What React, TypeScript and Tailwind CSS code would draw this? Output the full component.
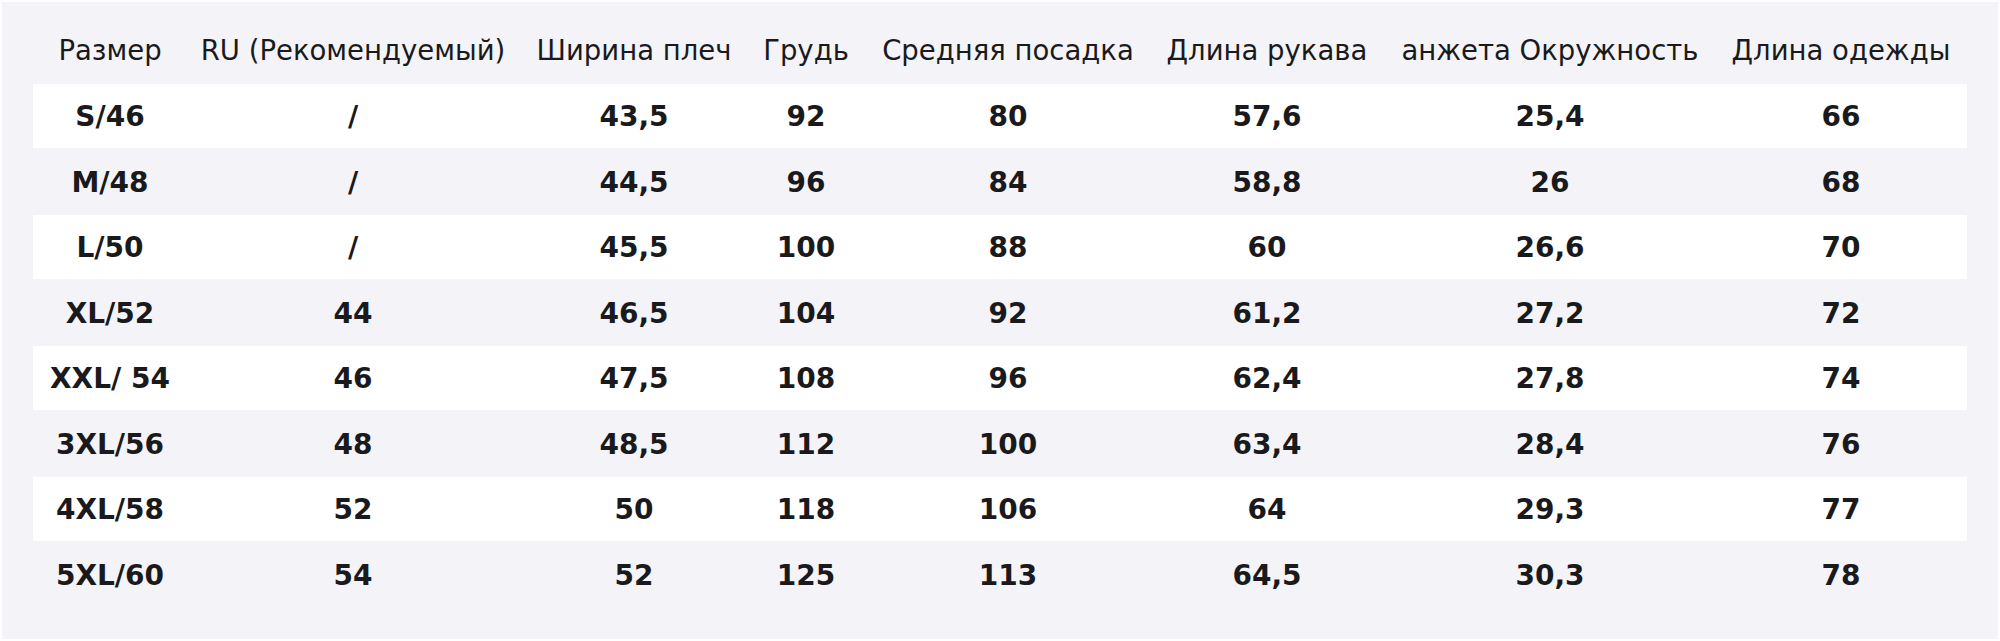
import React from 'react';

// Size chart columns (header labels as shown on the product page)
const columns = [
  'Размер',
  'RU (Рекомендуемый)',
  'Ширина плеч',
  'Грудь',
  'Средняя посадка',
  'Длина рукава',
  'анжета Окружность',
  'Длина одежды',
];

const rows: string[][] = [
  ['S/46', '/', '43,5', '92', '80', '57,6', '25,4', '66'],
  ['M/48', '/', '44,5', '96', '84', '58,8', '26', '68'],
  ['L/50', '/', '45,5', '100', '88', '60', '26,6', '70'],
  ['XL/52', '44', '46,5', '104', '92', '61,2', '27,2', '72'],
  ['XXL/ 54', '46', '47,5', '108', '96', '62,4', '27,8', '74'],
  ['3XL/56', '48', '48,5', '112', '100', '63,4', '28,4', '76'],
  ['4XL/58', '52', '50', '118', '106', '64', '29,3', '77'],
  ['5XL/60', '54', '52', '125', '113', '64,5', '30,3', '78'],
];

const gridCols = 'grid grid-cols-[154px_332px_230px_114px_290px_228px_338px_244px]';

export default function App() {
  return (
    <div className="w-[2000px] h-[641px] bg-white p-[2px] font-['DejaVu_Sans',sans-serif] text-[#1a1a1d]">
      <div className="h-[637px] bg-[#f4f4f8] px-[31px] pt-[15px] pb-[30px]">
        {/* Header */}
        <div className={`${gridCols} h-[67px] items-center text-[27.5px]`}>
          {columns.map(label => (
            <div key={label} className="text-center whitespace-nowrap">
              {label}
            </div>
          ))}
        </div>

        {/* Body rows, white / grey striping */}
        {rows.map((row, i) => (
          <div
            key={row[0]}
            className={`${gridCols} items-center pt-[2px] text-[28px] font-bold ${
              i % 2 === 0 ? 'h-[64px] bg-white' : 'h-[67px]'
            }`}
          >
            {row.map((cell, j) => (
              <div key={j} className="text-center whitespace-nowrap">
                {cell}
              </div>
            ))}
          </div>
        ))}
      </div>
    </div>
  );
}
